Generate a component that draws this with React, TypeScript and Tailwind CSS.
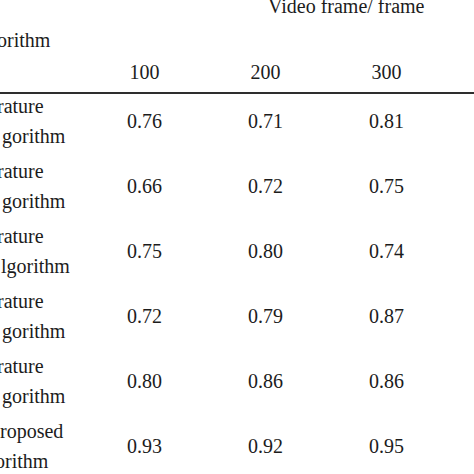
const rows = [
  { top: "rature", topShift: "-ml-[3px]", bottom: "gorithm", bottomShift: "ml-[2px]", values: ["0.76", "0.71", "0.81"] },
  { top: "rature", topShift: "-ml-[3px]", bottom: "gorithm", bottomShift: "ml-[2px]", values: ["0.66", "0.72", "0.75"] },
  { top: "rature", topShift: "-ml-[3px]", bottom: "lgorithm", bottomShift: "ml-[1px]", values: ["0.75", "0.80", "0.74"] },
  { top: "rature", topShift: "-ml-[3px]", bottom: "gorithm", bottomShift: "ml-[2px]", values: ["0.72", "0.79", "0.87"] },
  { top: "rature", topShift: "-ml-[3px]", bottom: "gorithm", bottomShift: "ml-[2px]", values: ["0.80", "0.86", "0.86"] },
  { top: "roposed", topShift: "ml-0", bottom: "orithm", bottomShift: "-ml-[5px]", values: ["0.93", "0.92", "0.95"] },
];

const App = () => {
  return (
    <div className="w-[474px] h-[474px] overflow-hidden bg-white text-[#1c1c1c] text-[20px] font-['Liberation_Serif',serif]">
      {/* Header */}
      <div className="grid grid-cols-[84px_121px_121px_121px] grid-rows-[60px_32px] border-b-2 border-[#2e2e2e]">
        <div className="row-span-2 pt-[30px] leading-none whitespace-nowrap">
          <span className="block -ml-[3px]">orithm</span>
        </div>
        <div className="col-span-3 pl-[184px] leading-[12px] whitespace-nowrap">Video frame/ frame</div>
        <div className="pt-[2px] leading-none text-center">100</div>
        <div className="pt-[2px] leading-none text-center">200</div>
        <div className="pt-[2px] leading-none text-center">300</div>
      </div>

      {/* Body */}
      <div className="flex flex-col">
        {rows.map((row, index) => (
          <div key={index} className="grid grid-cols-[84px_121px_121px_121px] items-center h-[65px] pb-[11px]">
            <div className="flex flex-col gap-[10px] leading-none whitespace-nowrap">
              <span className={`block ${row.topShift}`}>{row.top}</span>
              <span className={`block ${row.bottomShift}`}>{row.bottom}</span>
            </div>
            {row.values.map((value, i) => (
              <div key={i} className="leading-none text-center">{value}</div>
            ))}
          </div>
        ))}
      </div>
    </div>
  );
};

export default App;
